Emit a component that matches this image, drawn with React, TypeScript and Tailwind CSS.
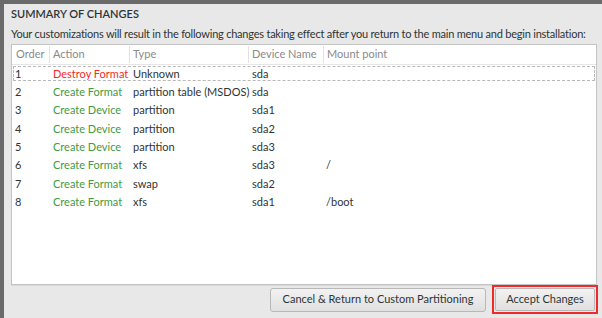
const rows = [
  { order: "1", action: "Destroy Format", destroy: true, type: "Unknown", device: "sda", mount: "" },
  { order: "2", action: "Create Format", type: "partition table (MSDOS)", device: "sda", mount: "" },
  { order: "3", action: "Create Device", type: "partition", device: "sda1", mount: "" },
  { order: "4", action: "Create Device", type: "partition", device: "sda2", mount: "" },
  { order: "5", action: "Create Device", type: "partition", device: "sda3", mount: "" },
  { order: "6", action: "Create Format", type: "xfs", device: "sda3", mount: "/" },
  { order: "7", action: "Create Format", type: "swap", device: "sda2", mount: "" },
  { order: "8", action: "Create Format", type: "xfs", device: "sda1", mount: "/boot" },
];

export default function App() {
  return (
    <div
      className="flex h-[318px] w-[602px] flex-col overflow-hidden whitespace-nowrap bg-[#6a6a6a] pl-[4px] pt-[4px] text-[11px] text-[#2e3436]"
      style={{ fontFamily: "Lato, 'Open Sans', sans-serif" }}
    >
      <div className="flex flex-1 flex-col bg-[#e8e8e8] pl-[7px] pr-[5px]">
        <div className="pt-[1px] text-[11px] font-semibold leading-[18px]">SUMMARY OF CHANGES</div>
        <div className="mt-[3px] leading-[15px] tracking-[-0.22px]">
          Your customizations will result in the following changes taking effect after you return to the main menu and begin installation:
        </div>
        <div className="mt-[3px] flex h-[241px] flex-col border border-[#c4c4c4] bg-white shadow-[0_1px_0_#d8d8d8]">
          <div className="flex h-[20px] shrink-0 items-center border-b border-[#e6e6e6] text-[#8a8a8a]">
            <div className="w-[38px] shrink-0 border-r border-[#e2e2e2] pl-[4px]">Order</div>
            <div className="w-[80px] shrink-0 border-r border-[#e2e2e2] pl-[3px]">Action</div>
            <div className="w-[119px] shrink-0 border-r border-[#e2e2e2] pl-[3px]">Type</div>
            <div className="w-[75px] shrink-0 border-r border-[#e2e2e2] pl-[3px]">Device Name</div>
            <div className="pl-[3px]">Mount point</div>
          </div>
          <div className="flex flex-col">
            {rows.map((r, i) => (
              <div key={r.order} className="relative flex h-[18.3px] items-center">
                {i === 0 && (
                  <span className="absolute bottom-[2px] left-[1px] right-[1px] top-[1px] border border-dashed border-[#b8b8b8]" />
                )}
                <div className="w-[38px] shrink-0 pl-[3px]">{r.order}</div>
                <div className={`w-[80px] shrink-0 pl-[3px] ${r.destroy ? "text-[#f32a2a]" : "text-[#3f9b3f]"}`}>
                  {r.action}
                </div>
                <div className="w-[119px] shrink-0 pl-[3px]">{r.type}</div>
                <div className="w-[75px] shrink-0 pl-[3px]">{r.device}</div>
                <div className="pl-[2px]">{r.mount}</div>
              </div>
            ))}
          </div>
        </div>
        <div className="-mr-[1px] flex items-center justify-end gap-[6px]">
          <button className="h-[24px] w-[216px] rounded-[3px] border border-[#b8b8b8] bg-gradient-to-b from-[#f2f2f2] to-[#e0e0e0] text-[11px] text-[#2e3436]">
            Cancel &amp; Return to Custom Partitioning
          </button>
          <div className="border-2 border-[#ee2a2a] p-[1px]">
            <button className="h-[23px] w-[100px] rounded-[2px] border border-[#b8b8b8] bg-gradient-to-b from-[#f2f2f2] to-[#e0e0e0] text-[11px] text-[#2e3436]">
              Accept Changes
            </button>
          </div>
        </div>
      </div>
    </div>
  );
}
